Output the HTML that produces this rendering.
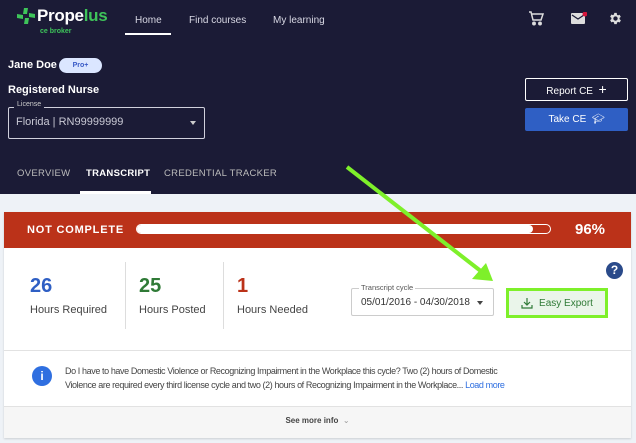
<!DOCTYPE html>
<html><head><meta charset="utf-8"><style>
*{box-sizing:border-box;margin:0;padding:0}
body{width:636px;height:443px;overflow:hidden;background:#eef2f7;font-family:"Liberation Sans",sans-serif;position:relative}
.hdr{position:absolute;left:0;top:0;width:636px;height:194px;background:#1b1b36;color:#fff}
.a{position:absolute}
.nav{font-size:10px;color:#d8d8e4}
.card{position:absolute;left:4px;top:212px;width:627px;height:226px;background:#fff;box-shadow:0 1px 2px rgba(0,0,0,.15)}
</style></head><body>
<div class="hdr">
  <svg class="a" style="left:17px;top:8px" width="18" height="16" viewBox="0 0 18 16"><g fill="#3ec45a"><path d="M7 0h4l-1 6H6z"/><path d="M18 6v4l-6-1V5z"/><path d="M11 16H7l1-6h4z"/><path d="M0 10V6l6 1v4z"/></g></svg>
  <div class="a" style="left:37px;top:6px;font-size:17px;font-weight:bold;color:#fff;letter-spacing:-0.3px">Prope<span style="color:#3ec45a">lus</span></div>
  <div class="a" style="left:40px;top:28px;font-size:7px;font-weight:bold;color:#3ec45a">ce broker</div>
  <div class="a nav" style="left:135px;top:15px">Home</div>
  <div class="a" style="left:125px;top:33px;width:46px;height:2px;background:#fff"></div>
  <div class="a nav" style="left:189px;top:15px">Find courses</div>
  <div class="a nav" style="left:273px;top:15px">My learning</div>
  <svg class="a" style="left:528px;top:11px" width="16" height="15" viewBox="0 0 16 15" fill="none" stroke="#ddd" stroke-width="1.5"><path d="M1 1h2l2 8h8l2-6H4"/><circle cx="6" cy="12.5" r="1.2" fill="#ddd"/><circle cx="12" cy="12.5" r="1.2" fill="#ddd"/></svg>
  <svg class="a" style="left:571px;top:12px" width="16" height="13" viewBox="0 0 16 13"><rect x="0" y="1" width="14" height="11" rx="1" fill="#ddd"/><path d="M1 3l6 4 6-4" stroke="#1b1b36" fill="none" stroke-width="1.2"/><circle cx="14" cy="2" r="2.5" fill="#d6163b"/></svg>
  <svg class="a" style="left:608px;top:11px" width="15" height="15" viewBox="0 0 24 24"><path fill="#ddd" d="M19.4 13a7.5 7.5 0 000-2l2.1-1.6-2-3.5-2.5 1a7 7 0 00-1.7-1L15 3h-4l-.4 2.6a7 7 0 00-1.7 1l-2.5-1-2 3.5L6.5 11a7.5 7.5 0 000 2l-2.1 1.6 2 3.5 2.5-1a7 7 0 001.7 1L11 21h4l.4-2.6a7 7 0 001.7-1l2.5 1 2-3.5zM13 15.5a3.5 3.5 0 110-7 3.5 3.5 0 010 7z" transform="translate(-1 0)"/></svg>
  <div class="a" style="left:8px;top:59px;font-size:11px;font-weight:bold">Jane Doe</div>
  <div class="a" style="left:59px;top:58px;width:43px;height:15px;border-radius:8px;background:#dbe6ff;color:#3a5bc7;font-size:7px;font-weight:bold;text-align:center;line-height:15px">Pro+</div>
  <div class="a" style="left:8px;top:84px;font-size:11px;font-weight:bold">Registered Nurse</div>
  <div class="a" style="left:8px;top:107px;width:197px;height:32px;border:1px solid #d0d0dc;border-radius:2px"></div>
  <div class="a" style="left:14px;top:101px;padding:0 3px;background:#1b1b36;font-size:7px;color:#ccc">License</div>
  <div class="a" style="left:16px;top:116px;font-size:11px;color:#c8c8d4">Florida | RN99999999</div>
  <div class="a" style="left:190px;top:121px;border:3px solid transparent;border-top:4px solid #ccc"></div>
  <div class="a" style="left:525px;top:78px;width:103px;height:23px;border:1px solid #fff;border-radius:2px;font-size:10px;text-align:center;line-height:21px">Report CE &nbsp;<span style="font-size:14px">+</span></div>
  <div class="a" style="left:525px;top:108px;width:103px;height:23px;background:#2f5fc4;border-radius:2px;font-size:10px;text-align:center;line-height:23px">Take CE &nbsp;🎓︎</div>
  <div class="a nav" style="left:17px;top:168px;font-size:9.5px;letter-spacing:.3px;color:#bbb">OVERVIEW</div>
  <div class="a nav" style="left:86px;top:168px;font-size:9.5px;letter-spacing:.3px;color:#fff;font-weight:bold">TRANSCRIPT</div>
  <div class="a" style="left:80px;top:191px;width:71px;height:3px;background:#fff"></div>
  <div class="a nav" style="left:164px;top:168px;font-size:9.5px;letter-spacing:.3px;color:#bbb">CREDENTIAL TRACKER</div>
</div>
<div class="card">
  <div class="a" style="left:0;top:0;width:627px;height:36px;background:#bb3219"></div>
  <div class="a" style="left:23px;top:12px;color:#fff;font-size:11px;font-weight:bold;letter-spacing:.8px">NOT COMPLETE</div>
  <div class="a" style="left:132px;top:12px;width:415px;height:10px;border:1px solid #fff;border-radius:5px"><div style="width:96%;height:100%;background:#fff;border-radius:5px"></div></div>
  <div class="a" style="left:571px;top:9px;color:#fff;font-size:15px;font-weight:bold">96%</div>
  <div class="a" style="left:26px;top:63px;font-size:20px;font-weight:bold;color:#2f5fc4">26</div>
  <div class="a" style="left:26px;top:92px;font-size:11px;color:#444">Hours Required</div>
  <div class="a" style="left:121px;top:50px;width:1px;height:67px;background:#ddd"></div>
  <div class="a" style="left:135px;top:63px;font-size:20px;font-weight:bold;color:#2f7a36">25</div>
  <div class="a" style="left:135px;top:92px;font-size:11px;color:#444">Hours Posted</div>
  <div class="a" style="left:219px;top:50px;width:1px;height:67px;background:#ddd"></div>
  <div class="a" style="left:233px;top:63px;font-size:20px;font-weight:bold;color:#bb3219">1</div>
  <div class="a" style="left:233px;top:92px;font-size:11px;color:#444">Hours Needed</div>
  <div class="a" style="left:602px;top:50px;width:17px;height:17px;border-radius:50%;background:#2a4a8a;color:#fff;font-size:12px;font-weight:bold;text-align:center;line-height:17px">?</div>
  <div class="a" style="left:347px;top:76px;width:143px;height:28px;border:1px solid #ccc;border-radius:2px"></div>
  <div class="a" style="left:355px;top:71px;padding:0 2px;background:#fff;font-size:7.5px;color:#555">Transcript cycle</div>
  <div class="a" style="left:357px;top:85px;font-size:10px;color:#333">05/01/2016 - 04/30/2018</div>
  <div class="a" style="left:473px;top:89px;border:3px solid transparent;border-top:4px solid #444"></div>
  <div class="a" style="left:502px;top:76px;width:102px;height:30px;border:3px solid #7ef02a;background:#eaf5ea;display:flex;align-items:center;justify-content:center;gap:6px;font-size:10px;color:#2f7a36">
    <svg width="12" height="12" viewBox="0 0 12 12" fill="none" stroke="#2f7a36" stroke-width="1.2"><path d="M6 1v7M3 5l3 3 3-3M1 8v3h10V8"/></svg>Easy Export</div>
  <div class="a" style="left:0;top:138px;width:627px;height:1px;background:#e2e2e2"></div>
  <div class="a" style="left:28px;top:154px;width:20px;height:20px;border-radius:50%;background:#2f6fe0;color:#fff;font-size:12px;font-weight:bold;text-align:center;line-height:20px">i</div>
  <div class="a" style="left:61px;top:152px;width:448px;font-size:9px;line-height:14px;color:#444;letter-spacing:-0.4px;white-space:nowrap">Do I have to have Domestic Violence or Recognizing Impairment in the Workplace this cycle? Two (2) hours of Domestic<br>Violence are required every third license cycle and two (2) hours of Recognizing Impairment in the Workplace... <span style="color:#2f6fe0">Load more</span></div>
  <div class="a" style="left:0;top:194px;width:627px;height:32px;background:#f6f6f6;border-top:1px solid #e2e2e2;font-size:8px;font-weight:bold;color:#444;text-align:center;line-height:28px">See more info &nbsp;<span style="color:#999;font-weight:normal">⌄</span></div>
</div>
<svg class="a" style="left:0;top:0" width="636" height="443"><line x1="347" y1="167" x2="482" y2="272" stroke="#7ef02a" stroke-width="4"/><polygon points="493,281 472,279 486,263" fill="#7ef02a"/></svg>
</body></html>
